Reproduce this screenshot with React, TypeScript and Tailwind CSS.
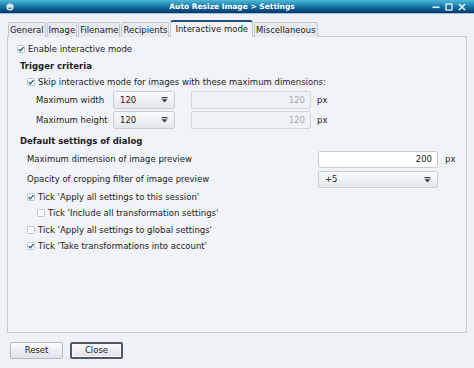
import React from 'react';

const font = { fontFamily: '"DejaVu Sans", "Liberation Sans", sans-serif' };

const Check: React.FC<{ checked?: boolean }> = ({ checked }) => (
  <svg width="8" height="8" viewBox="0 0 8 8" className="shrink-0">
    <rect x="0.5" y="0.5" width="7" height="7" rx="1" fill="#fbfcfd" stroke="#c2c8d0" />
    {checked && <path d="M1.6 4.1 L3.3 5.8 L6.5 2.2" fill="none" stroke="#1e4e7c" strokeWidth="1.2" />}
  </svg>
);

const Arrow: React.FC = () => (
  <svg width="7" height="6" viewBox="0 0 7 6">
    <rect x="0.5" y="0" width="6" height="1.2" fill="#3a3f46" />
    <path d="M0.5 2.2 H6.5 L3.5 5.6 Z" fill="#3a3f46" />
  </svg>
);

const Combo: React.FC<{ value: string; w: string }> = ({ value, w }) => (
  <div
    className={`${w} h-full flex items-center justify-between pl-[6px] pr-[6px] rounded-[2px] border border-[#c8cdd4] bg-gradient-to-b from-[#fbfcfd] to-[#e2e6eb]`}
  >
    <span>{value}</span>
    <Arrow />
  </div>
);

const CheckRow: React.FC<{ checked?: boolean; label: string; indent: string }> = ({ checked, label, indent }) => (
  <div className={`h-[16px] flex items-center ${indent}`}>
    <Check checked={checked} />
    <span className="ml-[3px]">{label}</span>
  </div>
);

const tabs = ['General', 'Image', 'Filename', 'Recipients', 'Interactive mode', 'Miscellaneous'];

const App: React.FC = () => {
  return (
    <div className="w-[474px] h-[368px] bg-[#eef1f6] text-[#1c1c1c] text-[8.5px] overflow-hidden flex flex-col" style={font}>
      {/* Title bar */}
      <div className="h-[14px] shrink-0 flex items-center px-[4px] bg-gradient-to-b from-[#4cbad8] via-[#1577a9] to-[#0b3565] border-b border-[#9fc4dc]">
        <svg width="8" height="8" viewBox="0 0 8 8" className="ml-[2px]">
          <circle cx="4" cy="4" r="3.6" fill="#dfe7ee" />
          <path d="M2 4.6 H6 V6 H2 Z" fill="#6f8497" />
        </svg>
        <div className="flex-1 text-center text-white font-bold text-[7.5px] pl-[18px]">
          Auto Resize Image &gt; Settings
        </div>
        <div className="flex items-center gap-[5px] mr-[4px]">
          <svg width="8" height="8" viewBox="0 0 8 8">
            <rect x="0.5" y="3.5" width="7" height="1.6" fill="#eaf3fa" />
          </svg>
          <svg width="8" height="8" viewBox="0 0 8 8">
            <rect x="1" y="1" width="6" height="6" fill="none" stroke="#eaf3fa" strokeWidth="1.3" />
          </svg>
          <svg width="8" height="8" viewBox="0 0 8 8">
            <path d="M1 1 L7 7 M7 1 L1 7" stroke="#eaf3fa" strokeWidth="1.6" />
          </svg>
        </div>
      </div>

      {/* Tabs */}
      <div className="flex items-end gap-[1px] pl-[8px] mt-[6px] h-[17px] shrink-0 relative z-10">
        {tabs.map((t) => {
          const active = t === 'Interactive mode';
          return (
            <div
              key={t}
              className={
                active
                  ? 'h-[17px] px-[4px] flex items-center bg-[#f0f3f8] border-x border-[#c2c8d0] border-t-2 border-t-[#1d4d7a] rounded-t-[3px]'
                  : 'h-[15px] px-[1px] flex items-center bg-[#e7eaef] border border-b-0 border-[#c2c8d0] rounded-t-[2px]'
              }
            >
              {t}
            </div>
          );
        })}
      </div>

      {/* Panel */}
      <div className="mx-[7px] w-[460px] h-[297px] border border-[#c6ccd4] bg-[#f0f3f8] -mt-px pt-[4px] flex flex-col">
        <CheckRow checked label="Enable interactive mode" indent="pl-[9px]" />
        <div className="h-[16px] mt-[1px] flex items-center pl-[12px] font-bold">Trigger criteria</div>
        <CheckRow checked label="Skip interactive mode for images with these maximum dimensions:" indent="pl-[19px]" />

        <div className="h-[18px] mt-[1px] flex items-center pl-[28px]">
          <span className="w-[77px]">Maximum width</span>
          <Combo value="120" w="w-[62px]" />
          <div className="ml-[16px] w-[120px] h-full flex items-center justify-end pr-[5px] rounded-[2px] border border-[#d2d7dd] bg-[#eef1f5] text-[#a4a9b0]">
            120
          </div>
          <span className="ml-[6px]">px</span>
        </div>
        <div className="h-[18px] mt-[2px] flex items-center pl-[28px]">
          <span className="w-[77px]">Maximum height</span>
          <Combo value="120" w="w-[62px]" />
          <div className="ml-[16px] w-[120px] h-full flex items-center justify-end pr-[5px] rounded-[2px] border border-[#d2d7dd] bg-[#eef1f5] text-[#a4a9b0]">
            120
          </div>
          <span className="ml-[6px]">px</span>
        </div>

        <div className="h-[16px] mt-[4px] flex items-center pl-[12px] font-bold">Default settings of dialog</div>

        <div className="h-[17px] mt-[2px] flex items-center pl-[19px]">
          <span className="w-[291px]">Maximum dimension of image preview</span>
          <div className="w-[120px] h-full flex items-center justify-end pr-[5px] rounded-[2px] border border-[#c8cdd4] bg-white">
            200
          </div>
          <span className="ml-[7px]">px</span>
        </div>
        <div className="h-[17px] mt-[3px] flex items-center pl-[19px]">
          <span className="w-[291px]">Opacity of cropping filter of image preview</span>
          <Combo value="+5" w="w-[120px]" />
        </div>

        <div className="mt-[1px]">
          <CheckRow checked label="Tick 'Apply all settings to this session'" indent="pl-[19px]" />
        </div>
        <CheckRow label="Tick 'Include all transformation settings'" indent="pl-[29px]" />
        <div className="mt-[1px]">
          <CheckRow label="Tick 'Apply all settings to global settings'" indent="pl-[19px]" />
        </div>
        <CheckRow checked label="Tick 'Take transformations into account'" indent="pl-[19px]" />
      </div>

      {/* Buttons */}
      <div className="flex gap-[7px] pl-[10px] mt-[9px]">
        <button className="w-[53px] h-[17px] rounded-[2px] border border-[#b4bac2] bg-gradient-to-b from-[#fbfcfd] to-[#dde1e7]" style={font}>
          Reset
        </button>
        <button className="w-[53px] h-[17px] rounded-[2px] border-2 border-[#4f5863] bg-gradient-to-b from-[#fbfcfd] to-[#dde1e7] shadow-[inset_0_0_0_1px_#f4f6f9]" style={font}>
          Close
        </button>
      </div>
    </div>
  );
};

export default App;
